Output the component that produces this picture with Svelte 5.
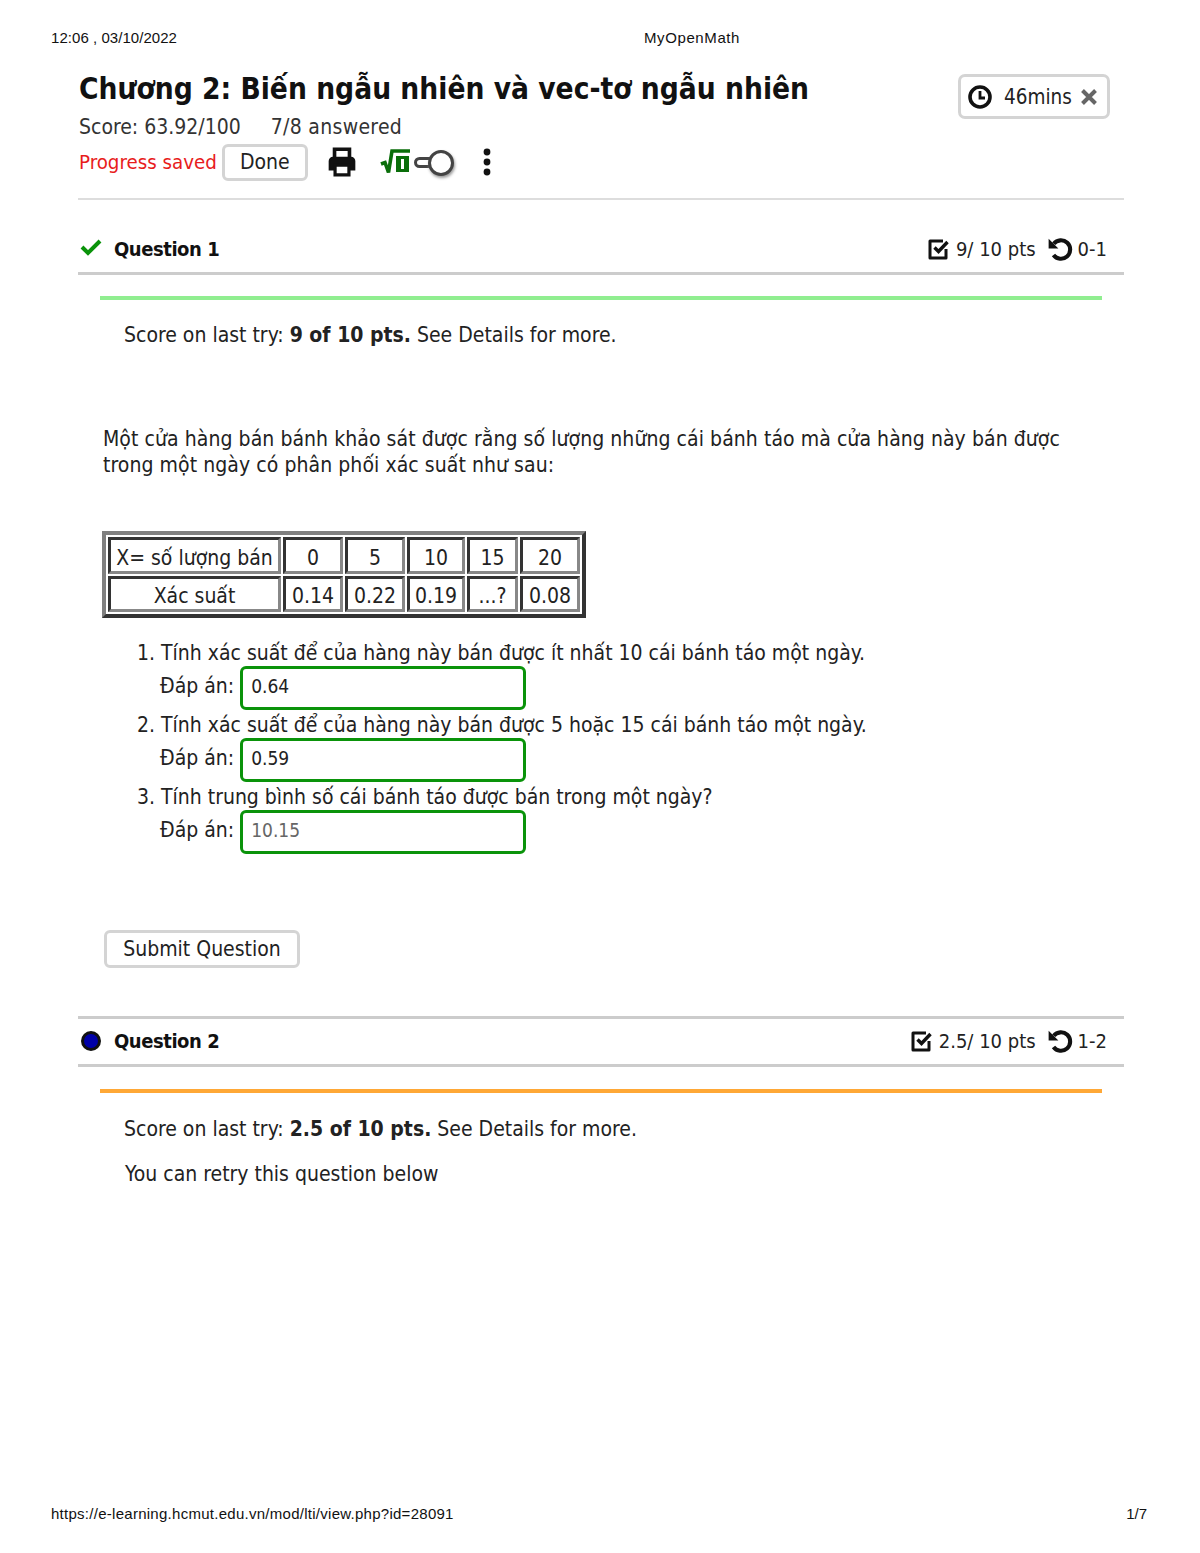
<script>
  const parts = [
    { text: 'Tính xác suất để của hàng này bán được ít nhất 10 cái bánh táo một ngày.', answer: '0.64' },
    { text: 'Tính xác suất để của hàng này bán được 5 hoặc 15 cái bánh táo một ngày.', answer: '0.59' },
    { text: 'Tính trung bình số cái bánh táo được bán trong một ngày?', answer: '10.15', muted: true }
  ];
  const xs = ['0', '5', '10', '15', '20'];
  const ps = ['0.14', '0.22', '0.19', '...?', '0.08'];
</script>

{#snippet checkIcon()}
  <svg class="ic" viewBox="0 0 24 24" width="24" height="24">
    <path d="M19 12v9H3V4h13" fill="none" stroke="#111" stroke-width="3" stroke-linejoin="round"/>
    <path d="M7.500 10.500l4 4 9-9.500" fill="none" stroke="#111" stroke-width="3.400"/>
  </svg>
{/snippet}

{#snippet retryIcon()}
  <svg class="ic" viewBox="0 0 24 24" width="26" height="26">
    <path d="M6.200 7.200A8.500 8.500 0 1 1 6 17.500" fill="none" stroke="#111" stroke-width="3.800"/>
    <path d="M1.500 2.500v9h9z" fill="#111"/>
  </svg>
{/snippet}

<div class="page">
  <header class="print-top">
    <span>12:06 , 03/10/2022</span>
    <span class="center">MyOpenMath</span>
  </header>

  <main>
    <div class="title-row">
      <div>
        <h1>Chương 2: Biến ngẫu nhiên và vec-tơ ngẫu nhiên</h1>
        <div class="score"><span>Score: 63.92/100</span><span class="answered">7/8 answered</span></div>
        <div class="actions">
          <span class="saved">Progress saved</span>
          <button class="btn done">Done</button>
          <svg class="print" viewBox="0 0 30 30" width="32" height="32">
            <path d="M8 11V3h14v8" fill="none" stroke="#111" stroke-width="3.400"/>
            <path d="M8 22H3.500v-8a3 3 0 0 1 3-3h17a3 3 0 0 1 3 3v8H22" fill="#111" stroke="#111" stroke-width="2"/>
            <path d="M8.500 18h13v9h-13z" fill="#fff" stroke="#111" stroke-width="3"/>
          </svg>
          <svg class="sqrt" viewBox="0 0 32 28" width="32" height="28">
            <path d="M1 16l4-1.500 3.500 10L12 3h18" fill="none" stroke="#0a6e0a" stroke-width="3.600"/>
            <path d="M16 8h13v16H16z M21 11v10h3V11z" fill="#0a6e0a" fill-rule="evenodd"/>
          </svg>
          <span class="toggle"><span class="track"></span><span class="knob"></span></span>
          <svg class="dots" viewBox="0 0 8 28" width="8" height="28">
            <circle cx="4" cy="4" r="3.400" fill="#111"/><circle cx="4" cy="14" r="3.400" fill="#111"/><circle cx="4" cy="24" r="3.400" fill="#111"/>
          </svg>
        </div>
      </div>
      <div class="timer">
        <svg viewBox="0 0 26 26" width="26" height="26">
          <circle cx="13" cy="13" r="10" fill="none" stroke="#111" stroke-width="3.600"/>
          <path d="M13 7v7h5" fill="none" stroke="#111" stroke-width="2.800"/>
        </svg>
        <span class="mins">46mins</span>
        <svg class="close" viewBox="0 0 18 18" width="18" height="18">
          <path d="M2.500 2.500l13 13M15.500 2.500l-13 13" stroke="#666" stroke-width="4"/>
        </svg>
      </div>
    </div>

    <section class="q q1">
      <div class="q-head">
        <svg class="status" viewBox="0 0 24 24" width="24" height="24">
          <path d="M3 12l6 6L21 6" fill="none" stroke="#0a930a" stroke-width="4"/>
        </svg>
        <strong>Question 1</strong>
        <span class="pts">{@render checkIcon()}<span>9/ 10 pts</span>{@render retryIcon()}<span>0-1</span></span>
      </div>
      <div class="bar green"></div>
      <p class="last-try">Score on last try: <b>9 of 10 pts.</b> See Details for more.</p>
      <p class="intro">Một cửa hàng bán bánh khảo sát được rằng số lượng những cái bánh táo mà cửa hàng này bán được trong một ngày có phân phối xác suất như sau:</p>

      <table>
        <tbody>
          <tr><td>X= số lượng bán</td>{#each xs as x}<td>{x}</td>{/each}</tr>
          <tr><td>Xác suất</td>{#each ps as p}<td>{p}</td>{/each}</tr>
        </tbody>
      </table>

      <ol>
        {#each parts as part}
          <li>
            <div class="part-text">{part.text}</div>
            <div class="answer">
              <span class="label">Đáp án:</span>
              <span class="input" class:muted={part.muted}>{part.answer}</span>
            </div>
          </li>
        {/each}
      </ol>

      <button class="btn submit">Submit Question</button>
    </section>

    <section class="q q2">
      <div class="q-head">
        <svg class="status" viewBox="0 0 24 24" width="24" height="24">
          <circle cx="12" cy="12" r="8.500" fill="#0000a8" stroke="#111" stroke-width="3"/>
        </svg>
        <strong>Question 2</strong>
        <span class="pts">{@render checkIcon()}<span>2.5/ 10 pts</span>{@render retryIcon()}<span>1-2</span></span>
      </div>
      <div class="bar orange"></div>
      <p class="last-try">Score on last try: <b>2.5 of 10 pts.</b> See Details for more.</p>
      <p class="retry">You can retry this question below</p>
    </section>
  </main>

  <footer class="print-bottom">
    <span>https://e-learning.hcmut.edu.vn/mod/lti/view.php?id=28091</span>
    <span>1/7</span>
  </footer>
</div>

<style>
  :global(body) {
    margin: 0;
    background: #fff;
  }
  .page {
    height: 1553px;
    display: flex;
    flex-direction: column;
    font-family: "DejaVu Sans Condensed", "DejaVu Sans", sans-serif;
    font-size: 21px;
    color: #222;
    overflow: hidden;
  }
  .print-top, .print-bottom {
    font-family: "Liberation Sans", sans-serif;
    font-size: 15px;
    color: #111;
    display: flex;
    padding: 0 53px 0 51px;
    line-height: 17px;
  }
  .print-top {
    padding-top: 29px;
  }
  .print-top span:first-child {
    letter-spacing: 0.05px;
  }
  .center {
    margin-left: 467px;
    letter-spacing: 0.6px;
  }
  .print-bottom {
    margin-top: auto;
    justify-content: space-between;
    padding-bottom: 31px;
  }
  .print-bottom span:first-child {
    letter-spacing: 0.27px;
  }
  main {
    margin: 20px 76px 0 78px;
  }
  .title-row {
    display: flex;
    justify-content: space-between;
    border-bottom: 2px solid #ddd;
    padding: 3px 14px 0 1px;
    height: 134px;
    box-sizing: border-box;
  }
  h1 {
    font-size: 29.600px;
    line-height: 40px;
    margin: 0;
    color: #111;
  }
  .score {
    line-height: 26px;
    margin-top: 5px;
    color: #333;
  }
  .answered {
    margin-left: 30px;
    letter-spacing: 0.3px;
  }
  .actions {
    display: flex;
    align-items: center;
    margin-top: 3px;
    height: 38px;
  }
  .saved {
    color: #e81c1c;
    font-size: 20.300px;
  }
  .btn {
    font: inherit;
    background: #fff;
    color: #222;
    border: 3px solid #d4d4d4;
    border-radius: 6px;
  }
  .done {
    margin-left: 5px;
    width: 86px;
    height: 37px;
    padding: 0;
  }
  .print {
    margin-left: 18px;
  }
  .sqrt {
    margin-left: 22px;
  }
  .toggle {
    position: relative;
    width: 44px;
    height: 28px;
    margin-left: 1px;
  }
  .track {
    position: absolute;
    left: 1px;
    top: 9px;
    width: 22px;
    height: 11px;
    border: 3px solid #444;
    border-radius: 8px;
    box-sizing: border-box;
  }
  .knob {
    position: absolute;
    left: 15px;
    top: 2px;
    width: 26px;
    height: 26px;
    border: 3px solid #444;
    border-radius: 50%;
    background: #fff;
    box-sizing: border-box;
    box-shadow: 1px 2px 3px #999;
  }
  .dots {
    margin-left: 26px;
  }
  .timer {
    display: flex;
    align-items: center;
    gap: 11px;
    box-sizing: border-box;
    width: 152px;
    height: 45px;
    border: 3px solid #d4d4d4;
    border-radius: 7px;
    margin-top: 5px;
    padding-left: 6px;
  }
  .mins {
    font-size: 20.500px;
  }
  .close {
    margin-left: -3px;
  }
  .q-head {
    display: flex;
    align-items: center;
    height: 75px;
    border-bottom: 3px solid #ccc;
    box-sizing: border-box;
    padding-top: 26px;
  }
  .q2 .q-head {
    height: 48px;
    padding: 0 0 2px;
  }
  .status {
    margin-left: 1px;
    flex: none;
  }
  .q1 .status {
    margin-top: -4px;
  }
  .q-head strong {
    margin-left: 11px;
    color: #111;
    font-size: 20px;
    letter-spacing: -0.45px;
  }
  .pts {
    margin-left: auto;
    margin-right: 17px;
    display: flex;
    align-items: center;
    gap: 5px;
    font-size: 20px;
  }
  .pts .ic {
    margin-left: 6px;
  }
  .bar {
    height: 4px;
    margin: 21px 22px 0;
  }
  .q2 .bar {
    margin-top: 22px;
  }
  .green {
    background: #90ee90;
  }
  .orange {
    background: #ffa836;
  }
  .last-try {
    margin: 22px 0 0 46px;
    line-height: 26px;
  }
  .q2 .last-try {
    margin-top: 23px;
  }
  .intro {
    margin: 78px 50px 0 25px;
    line-height: 26px;
    letter-spacing: 0.065px;
  }
  table {
    margin: 53px 0 0 24px;
    border: 4px solid;
    border-color: #808080 #333 #333 #808080;
    border-spacing: 2px;
    text-align: center;
  }
  td {
    box-sizing: border-box;
    border: 3px solid;
    border-color: #333 #888 #888 #333;
    padding: 3px 0 0;
    white-space: nowrap;
    width: 60px;
    height: 36px;
  }
  tr:first-child td {
    height: 37px;
    padding-top: 5px;
  }
  td:nth-child(1) {
    width: 173px;
  }
  td:nth-child(4) {
    width: 58px;
  }
  td:nth-child(5) {
    width: 51px;
  }
  ol {
    margin: 21px 0 0;
    padding: 0 0 0 83px;
  }
  .part-text {
    line-height: 26px;
    padding-top: 1px;
  }
  .answer {
    display: flex;
    align-items: flex-start;
    gap: 6px;
    height: 45px;
    margin-left: -1px;
  }
  .label {
    line-height: 44px;
    margin-top: -2px;
  }
  .input {
    box-sizing: border-box;
    width: 286px;
    height: 44px;
    border: 3px solid #0a930a;
    border-radius: 6px;
    padding-left: 8px;
    line-height: 35px;
    font-size: 19px;
  }
  .muted {
    color: #666;
  }
  .submit {
    margin: 75px 0 0 26px;
    width: 196px;
    height: 38px;
    padding: 0;
    display: block;
  }
  .q2 {
    margin-top: 48px;
    border-top: 3px solid #ccc;
  }
  .retry {
    margin: 19px 0 0 47px;
    line-height: 26px;
  }
</style>
